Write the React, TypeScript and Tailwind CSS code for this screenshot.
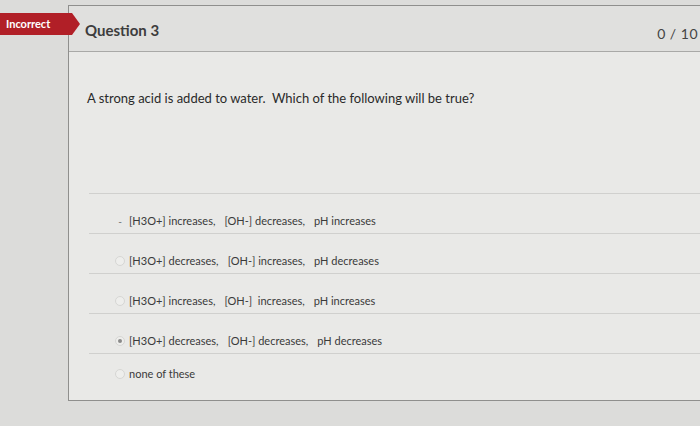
import { useState } from "react";

const ANSWERS = [
  { id: 1, parts: ["[H3O+] increases,", "[OH-] decreases,", "pH increases"], mark: "dash" },
  { id: 2, parts: ["[H3O+] decreases,", "[OH-] increases,", "pH decreases"], mark: "none" },
  { id: 3, parts: ["[H3O+] increases,", "[OH-]  increases,", "pH increases"], mark: "none" },
  { id: 4, parts: ["[H3O+] decreases,", "[OH-] decreases,", "pH decreases"], mark: "selected" },
  { id: 5, parts: ["none of these"], mark: "none" },
];

function Radio({ mark }: { mark: string }) {
  if (mark === "dash") {
    return <span className="w-[10px] h-[10px] flex items-center justify-center text-[#666] text-[10px] leading-none">-</span>;
  }
  return (
    <span className="w-[10px] h-[10px] rounded-full border border-[#d6d6d4] bg-[#eeeeec] flex items-center justify-center">
      {mark === "selected" && <span className="w-[4px] h-[4px] rounded-full bg-[#8a8a8a]" />}
    </span>
  );
}

export default function App() {
  const [picked] = useState(4);

  return (
    <div
      className="w-[700px] h-[426px] bg-[#dcdcda] overflow-hidden relative"
      style={{ fontFamily: "Lato, 'Open Sans', sans-serif" }}
    >
      {/* Incorrect tag */}
      <div className="absolute left-0 top-[13px] h-[22px] flex items-center z-10">
        <div className="h-full w-[72px] bg-[#b11f27] flex items-center pl-[6px] text-white text-[11px] font-bold">
          Incorrect
        </div>
        <div className="w-0 h-0 border-y-[11px] border-y-transparent border-l-[8px] border-l-[#b11f27]" />
      </div>

      <div className="pt-[5px] pl-[68px] h-full">
        <div className="h-[396px] border-l border-t border-b border-[#8f8f8d] bg-[#e9e9e7] flex flex-col">
          {/* Header */}
          <div className="h-[46px] bg-[#e0e0de] border-b border-[#a9a9a7] flex items-center justify-between pl-[16px] pr-[2px]">
            <span className="text-[15px] font-bold text-[#3d3d3d] pt-[4px]">Question 3</span>
            <span className="text-[14px] text-[#444] pt-[10px] tracking-[0.5px]">0 / 10</span>
          </div>

          {/* Body */}
          <div className="flex-1 pl-[18px]">
            <p className="mt-[37px] text-[13px] text-[#2a2a2a]">
              A strong acid is added to water.&nbsp; Which of the following will be true?
            </p>

            <div className="mt-[84px] ml-[2px]">
              {ANSWERS.map((a, i) => (
                <div
                  key={a.id}
                  className={`flex items-center gap-[4px] pl-[26px] border-t border-[#d0d0ce] ${
                    i < ANSWERS.length - 1 ? "pt-[20px] pb-[5px]" : "pt-[13px] pb-[7px]"
                  }`}
                >
                  <Radio mark={a.id === picked ? "selected" : a.mark} />
                  <span className="text-[11px] leading-[14px] text-[#3a3a3a] flex gap-[9px]">
                    {a.parts.map((p, j) => (
                      <span key={j} className="whitespace-pre">{p}</span>
                    ))}
                  </span>
                </div>
              ))}
            </div>
          </div>
        </div>
      </div>
    </div>
  );
}
